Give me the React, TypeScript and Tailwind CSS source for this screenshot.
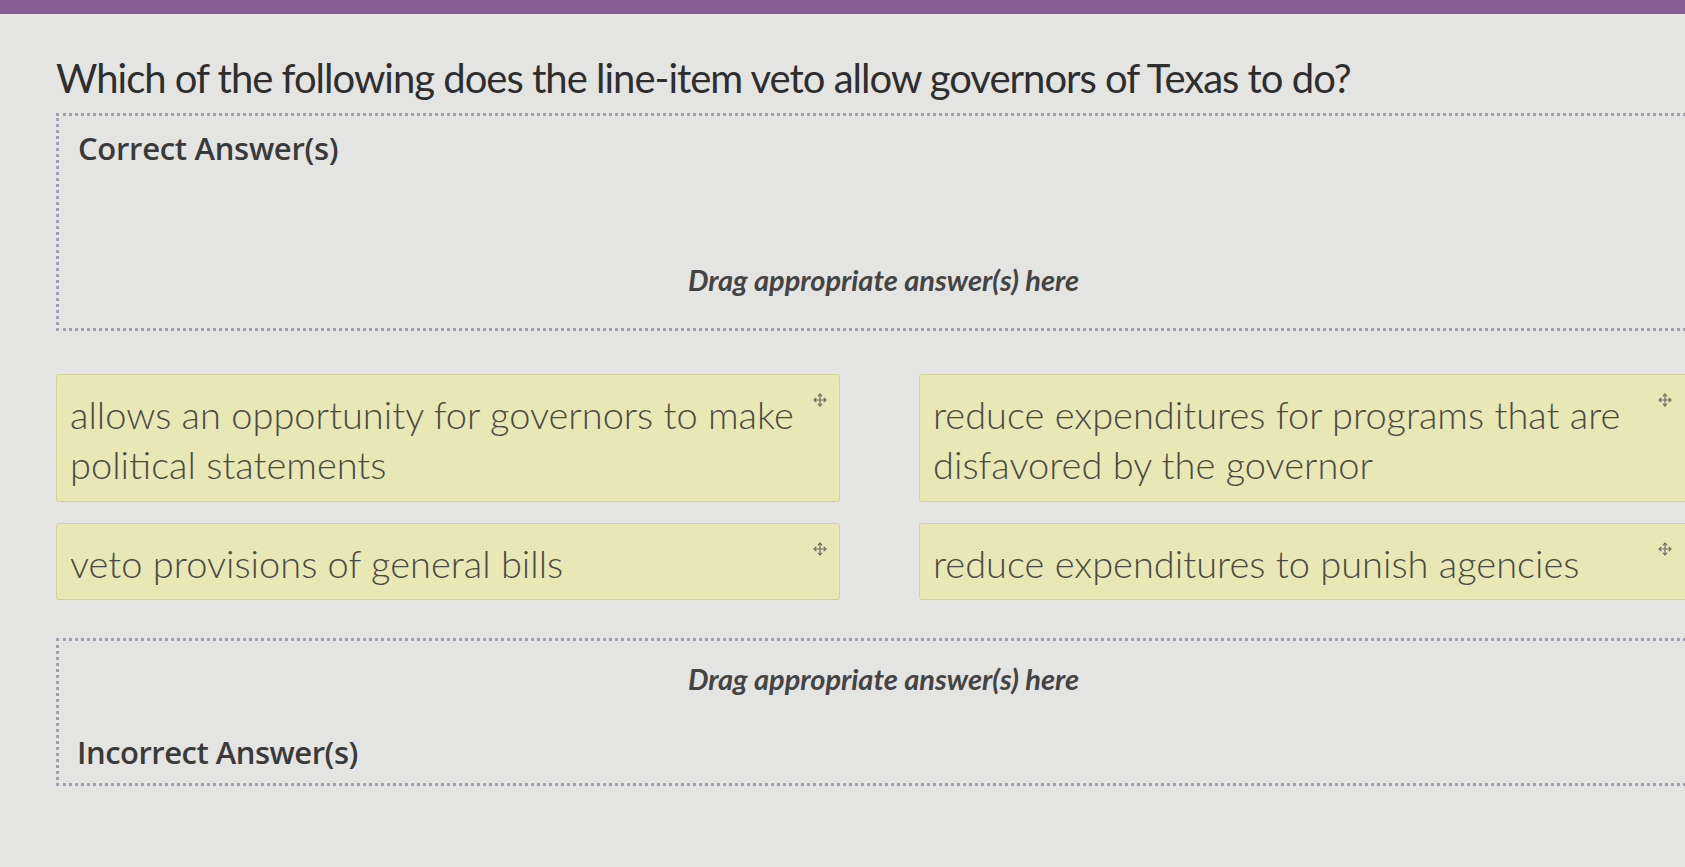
import { Move } from "lucide-react";

const answers = [
  ["allows an opportunity for governors to make political statements", "reduce expenditures for programs that are disfavored by the governor"],
  ["veto provisions of general bills", "reduce expenditures to punish agencies"],
];

export default function App() {
  return (
    <div className="h-[867px] w-full overflow-hidden bg-[#e4e4e2] font-['Lato',sans-serif] text-[#333]">
      <div className="h-[14px] bg-[#855c94]" />
      <div className="pl-[56px]">
        <h1 className="mt-[40px] text-[40px] leading-[48px] tracking-[-1px] text-[#2e2e2e]">
          Which of the following does the line-item veto allow governors of Texas to do?
        </h1>

        <DropZone className="mt-[11px] h-[218px]">
          <p className="pl-[19px] pt-[12px] font-['Open_Sans',sans-serif] text-[31px] font-semibold leading-[40px] tracking-[-0.3px] text-[#3a3a3a]">
            Correct Answer(s)
          </p>
          <p className="mt-[94px] text-center text-[29px] font-bold italic leading-[36px] text-[#444]">Drag appropriate answer(s) here</p>
        </DropZone>

        <div className="mt-[43px] flex flex-col gap-[21px]">
          {answers.map((row, i) => (
            <div key={i} className="flex gap-[79px]">
              {row.map((text, j) => (
                <Card key={text} text={text} tall={i === 0} grow={j === 1} />
              ))}
            </div>
          ))}
        </div>

        <DropZone className="mt-[38px] h-[148px]">
          <p className="mt-[20px] text-center text-[29px] font-bold italic leading-[36px] text-[#444]">Drag appropriate answer(s) here</p>
          <p className="pl-[18px] pt-[35px] font-['Open_Sans',sans-serif] text-[31px] font-semibold leading-[40px] tracking-[-0.5px] text-[#3a3a3a]">
            Incorrect Answer(s)
          </p>
        </DropZone>
      </div>
    </div>
  );
}

function DropZone({ className, children }: { className: string; children: React.ReactNode }) {
  return <div className={`w-[1655px] shrink-0 border-[3px] border-dotted border-[#9ea1b3] ${className}`}>{children}</div>;
}

function Card({ text, tall, grow }: { text: string; tall: boolean; grow: boolean }) {
  return (
    <div
      className={`relative rounded-[3px] border border-[#d2d39a] bg-[#e7e8b5] pl-[13px] pr-[28px] pt-[14px] ${
        grow ? "-mr-[8px] flex-1" : "w-[784px] shrink-0"
      } ${tall ? "h-[128px]" : "h-[77px]"}`}
    >
      <p className="text-[38px] font-light leading-[50px] text-[#4a4a44]">{text}</p>
      <Move
        className={`absolute top-[18px] size-[14px] text-[#666] ${grow ? "right-[20px]" : "right-[12px]"}`}
        strokeWidth={2}
      />
    </div>
  );
}
